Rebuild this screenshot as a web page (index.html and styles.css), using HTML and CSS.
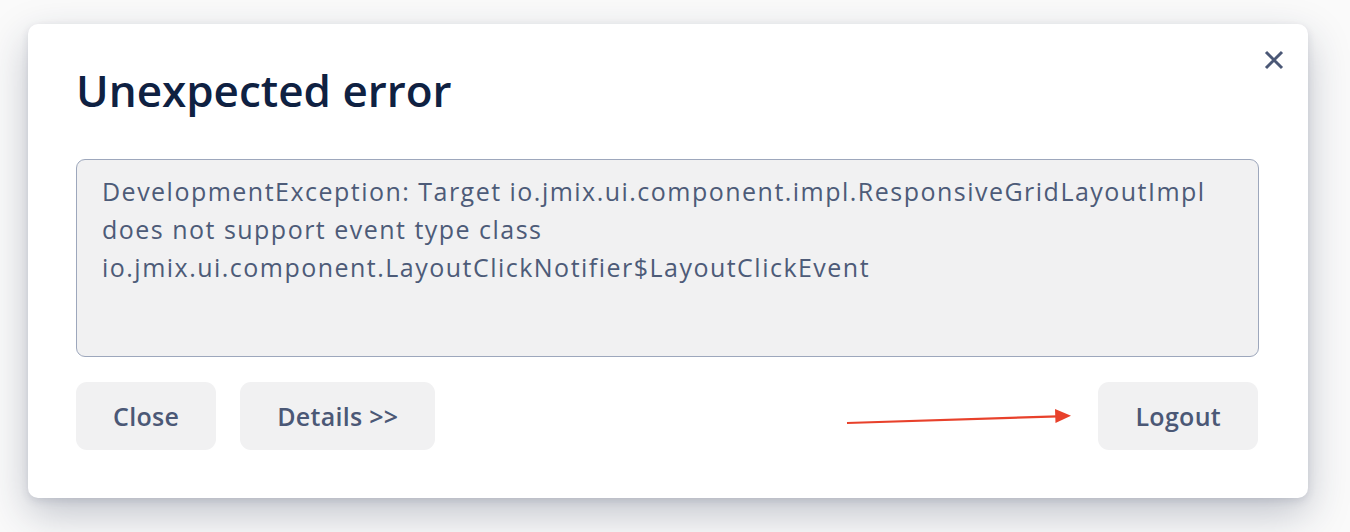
FILE: index.html
```html
<!DOCTYPE html>
<html lang="en">
<head>
<meta charset="utf-8">
<title>Unexpected error</title>
<link rel="stylesheet" href="styles.css">
</head>
<body>
<div class="dialog">
  <button class="close-x" aria-label="Close">
    <svg width="20" height="20" viewBox="0 0 20 20"><path d="M2 2 L18 18 M18 2 L2 18" stroke="#4b5876" stroke-width="3" stroke-linecap="butt"/></svg>
  </button>
  <h1 class="title">Unexpected error</h1>
  <div class="message">DevelopmentException: Target io.jmix.ui.component.impl.ResponsiveGridLayoutImpl does not support event type class io.jmix.ui.component.LayoutClickNotifier$LayoutClickEvent</div>
  <div class="buttons">
    <button class="btn">Close</button>
    <button class="btn">Details &gt;&gt;</button>
    <span class="spacer"></span>
    <button class="btn">Logout</button>
  </div>
  <svg class="arrow" width="240" height="24" viewBox="0 0 240 24">
    <line x1="1" y1="16" x2="212" y2="9.3" stroke="#e8412b" stroke-width="2.2"/>
    <polygon points="225,8.8 209,2 209.5,16" fill="#e8412b"/>
  </svg>
</div>
</body>
</html>
```

FILE: styles.css
```css
html, body {
  margin: 0;
  padding: 0;
}
body {
  background: #fafafa;
  width: 1350px;
  height: 532px;
  overflow: hidden;
  font-family: "Open Sans", "Noto Sans", sans-serif;
}
.dialog {
  position: relative;
  margin: 24px 0 0 28px;
  width: 1280px;
  height: 474px;
  box-sizing: border-box;
  padding: 40px 48px 0 48px;
  background: #ffffff;
  border-radius: 10px;
  box-shadow: 0 16px 42px rgba(30, 42, 75, 0.26), 0 3px 8px rgba(30, 42, 75, 0.12);
}
.close-x {
  position: absolute;
  top: 26px;
  right: 24px;
  width: 20px;
  height: 20px;
  padding: 0;
  border: 0;
  background: none;
  display: flex;
}
.title {
  margin: 0;
  font-size: 44px;
  line-height: 52px;
  font-weight: 600;
  color: #0f2142;
  letter-spacing: 0;
}
.message {
  margin-top: 43px;
  height: 198px;
  box-sizing: border-box;
  width: 1183px;
  padding: 12px 20px 12px 25px;
  background: #f1f1f2;
  border: 1.5px solid #9da7bc;
  border-radius: 9px;
  font-size: 25px;
  line-height: 38px;
  letter-spacing: 1.48px;
  color: #4d5b78;
}
.buttons {
  display: flex;
  gap: 24px;
  margin-top: 25px;
  width: 1182px;
}
.spacer {
  flex: 1;
}
.btn {
  height: 68px;
  padding: 0 37px;
  border: 0;
  border-radius: 11px;
  background: #f1f1f2;
  font-family: "Open Sans", "Noto Sans", sans-serif;
  font-size: 25px;
  font-weight: 600;
  letter-spacing: 0.3px;
  color: #4b5876;
}
.arrow {
  position: absolute;
  left: 818px;
  top: 383px;
}
```
